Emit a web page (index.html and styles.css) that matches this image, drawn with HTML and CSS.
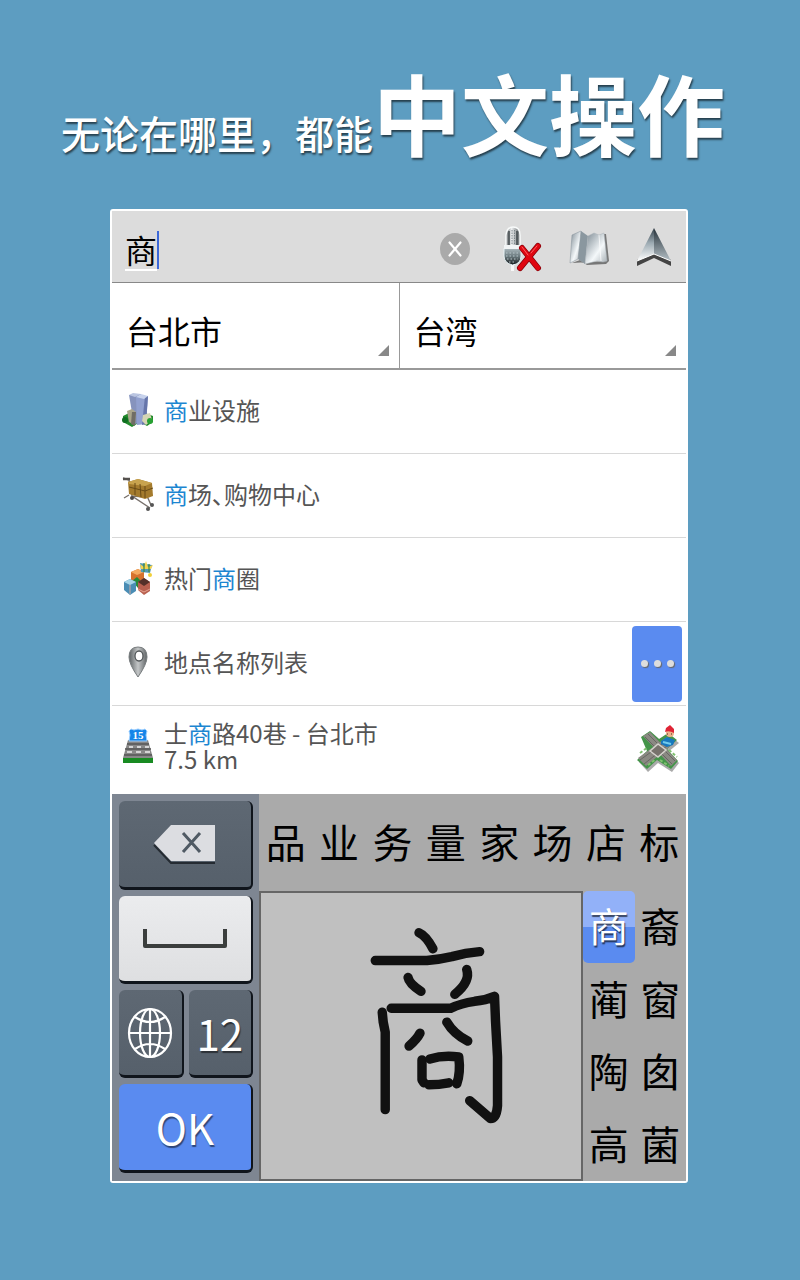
FILE: index.html
```html
<!DOCTYPE html>
<html lang="zh-CN">
  <head>
    <meta charset="UTF-8" />
    <meta name="viewport" content="width=device-width, initial-scale=1.0" />
    <title>中文操作</title>
    <link rel="stylesheet" href="styles.css">
  </head>
  <body>
    <h1 class="headline">无论在哪里，都能<strong>中文操作</strong></h1>

    <main class="device">
      <!-- Search bar -->
      <form class="search">
        <div class="search-field">
          <input class="search-input" type="text" value="商" aria-label="搜索" />
          <span class="caret"></span>
        </div>
        <button class="clear" type="button" aria-label="清除">
          <svg width="30" height="34" viewBox="0 0 30 34">
            <ellipse cx="15" cy="17" rx="15" ry="16" fill="#aaa" />
            <path d="M9.500 10.500l11 13M20.500 10.500l-11 13" stroke="#fff" stroke-width="2.200" stroke-linecap="round" />
          </svg>
        </button>
        <button class="tool" type="button" aria-label="语音">
          <svg width="40" height="46" viewBox="0 0 40 46">
            <defs>
              <linearGradient id="mic" x1="0" x2="1" y1="0" y2="0">
                <stop offset="0" stop-color="#6c7073" /><stop offset="0.400" stop-color="#eef0f1" /><stop offset="1" stop-color="#62676a" />
              </linearGradient>
              <linearGradient id="mic-body" x1="0" x2="0" y1="0" y2="1">
                <stop offset="0" stop-color="#aebbc0" /><stop offset="0.500" stop-color="#69787d" /><stop offset="1" stop-color="#15191b" />
              </linearGradient>
            </defs>
            <rect x="9" y="37" width="3" height="8" fill="#f7f7f7" />
            <path d="M2 22h17v8q0 8-8.500 9Q2 37 2 30z" fill="url(#mic-body)" stroke="#e8f3f6" />
            <path d="M4 22V9Q5 1 11 1q7 0 7 8v13z" fill="url(#mic)" stroke="#f8fafa" stroke-width="1.500" />
            <path d="M7 5v15M15 5v15" stroke="#3f474b" stroke-width="1.500" />
            <path d="M10 4v16M12.500 4v16" stroke="#7c868a" stroke-width="1" stroke-dasharray="1.500 1" />
            <path d="M2 19h17v4H2z" fill="#f1f4f5" />
            <path d="M4 27h13M4 30h13M5 33h11M7 36h7" stroke="#b7c5ca" stroke-dasharray="1.500 2" />
            <path d="M20 22l16 20M36 20L18 42" stroke="#86000a" stroke-width="6" stroke-linecap="round" />
            <path d="M20 22l16 20M36 20L18 42" stroke="#df0711" stroke-width="4.500" stroke-linecap="round" />
            <path d="M20 21l6 8M35 20l-6 7" stroke="#ff6064" stroke-width="1" stroke-linecap="round" />
          </svg>
        </button>
        <button class="tool" type="button" aria-label="地图">
          <svg width="40" height="46" viewBox="0 0 40 46">
            <defs>
              <linearGradient id="fold" x1="0" x2="1" y1="0" y2="1">
                <stop offset="0" stop-color="#7a8790" /><stop offset="0.600" stop-color="#f4f8fa" /><stop offset="1" stop-color="#a5adb2" />
              </linearGradient>
            </defs>
            <path d="M3 37l8-3 7 5 19-1 3-3-3-27h-3l3 27z" fill="#777" />
            <path d="M3 9l9-4-3 28-8 4z" fill="url(#fold)" stroke="#84909a" stroke-width="0.500" />
            <path d="M12 5l7 5-3 28-7-5z" fill="#8a979f" />
            <path d="M19 10l6-3 5 2 5-2 3 28-4 1-6-1-12 3z" fill="url(#fold)" stroke="#aab3b8" stroke-width="0.500" />
            <path d="M30 9l2 26" stroke="#fff" stroke-width="0.700" />
          </svg>
        </button>
        <button class="tool" type="button" aria-label="导航">
          <svg width="36" height="46" viewBox="0 0 36 46">
            <defs>
              <linearGradient id="nav" x1="0" x2="0" y1="0" y2="1">
                <stop offset="0" stop-color="#303d46" /><stop offset="0.450" stop-color="#9caab2" /><stop offset="1" stop-color="#fff" />
              </linearGradient>
              <linearGradient id="nav-side" x1="0" x2="0" y1="0" y2="1">
                <stop offset="0" stop-color="#26323a" /><stop offset="1" stop-color="#b4bfc5" />
              </linearGradient>
            </defs>
            <path d="M1 34l17-8 17 8v6l-17-8-17 8z" fill="#444" />
            <path d="M18 2L1 35l17-7z" fill="url(#nav)" />
            <path d="M18 2l17 33-17-7z" fill="url(#nav-side)" />
            <path d="M1 35l17-7 17 7" fill="none" stroke="#fff" stroke-width="1" />
          </svg>
        </button>
      </form>

      <div class="places">
        <div class="place">
          <select aria-label="城市"><option>台北市</option></select>
        </div>
        <div class="place">
          <select aria-label="地区"><option>台湾</option></select>
        </div>
      </div>

      <!-- Suggestions -->
      <ul class="results">
        <li>
          <a href="#facilities">
            <svg class="icon" viewBox="0 0 32 36">
              <path d="M1 24l6-3 8 8 8-8 8 3v6l-6 4-7-4-8 5-9-5z" fill="#238a2c" />
              <path d="M7 3l12-1 1 29-8 1z" fill="#8693bd" />
              <path d="M7 3l4-2 8 1-6 3z" fill="#bac5e1" />
              <path d="M14 5l12-1-2 28-9 1z" fill="#91a0cf" />
              <path d="M23 4l3 0-2 28-4 1z" fill="#6675aa" />
              <path d="M14 5l5-3 7 2-4 3z" fill="#c7d2ec" />
              <path d="M5 19l5-2 4 3-1 13-6-3z" fill="#aaa58b" />
              <path d="M10 20l4 0-1 14-4-2z" fill="#706d65" />
              <path d="M21 23l7-2 2 7-6 5-4-4z" fill="#d5d5b3" />
              <circle cx="3" cy="28" r="3" fill="#0f6e20" /><circle cx="28" cy="29" r="3" fill="#28a133" />
            </svg>
            <span><mark>商</mark>业设施</span>
          </a>
        </li>
        <li>
          <a href="#malls">
            <svg class="icon" viewBox="0 0 32 36">
              <path d="M1 2l6 2 3 16 18 12M7 19l-5 3M25 20l4 9M10 20l14 1" fill="none" stroke="#77706b" stroke-width="1.400" />
              <path d="M6 6l10-3 14 4 1 13-8 3-16-5z" fill="#a47b2d" />
              <path d="M6 6l10-3 14 4-7 3-16-2z" fill="#c8a34e" />
              <path d="M13 7v12M18 8l1 13M23 10v12M7 11l16 4 8-3" stroke="#684b16" stroke-width="1" fill="none" />
              <path d="M1 3h7" stroke="#55514e" stroke-width="2.500" />
              <circle cx="10" cy="22" r="2" fill="#4e4a49" /><circle cx="26" cy="33" r="2" fill="#555" /><circle cx="30" cy="29" r="2" fill="#555" />
            </svg>
            <span><mark>商</mark>场、购物中心</span>
          </a>
        </li>
        <li>
          <a href="#popular">
            <svg class="icon" viewBox="0 0 32 36">
              <path d="M9 12l7-3 6 3v9l-7 3-6-4z" fill="#d6722d" />
              <path d="M9 12l7-3 6 3-7 3z" fill="#f4aa60" />
              <path d="M18 3l12 2-2 8-9-1z" fill="#549ab7" />
              <path d="M18 4l4 3 2-6 2 6 5-2-2 4H19z" fill="#f5d34f" />
              <path d="M22 3v9M27 4v8" stroke="#3b8944" stroke-width="1.200" />
              <path d="M10 21l5-4 5 5-4 6z" fill="#288a39" />
              <path d="M2 22l6-3 6 3v9l-6 4-6-5z" fill="#4a8db5" />
              <path d="M2 22l6-3 6 3-6 3z" fill="#a7d5e8" />
              <path d="M16 22l6-4 6 4v9l-6 4-6-5z" fill="#b8604f" />
              <path d="M16 22l6-4 6 4-6 4z" fill="#543029" />
              <path d="M8 25v9M16 29l6 3 6-3" stroke="#efb3a0" stroke-width="0.800" fill="none" />
              <circle cx="28" cy="15" r="2" fill="#f0cf39" />
            </svg>
            <span>热门<mark>商</mark>圈</span>
          </a>
        </li>
        <li>
          <a href="#names">
            <svg class="icon" viewBox="0 0 32 36">
              <defs>
                <linearGradient id="pin" x1="0" x2="1" y1="0" y2="0">
                  <stop offset="0" stop-color="#5d6264" /><stop offset="0.500" stop-color="#c3c6c7" /><stop offset="1" stop-color="#606466" />
                </linearGradient>
              </defs>
              <path d="M16 33Q7 20 7 13q0-10 9-10t9 10q0 7-9 20z" fill="url(#pin)" stroke="#777c7e" />
              <ellipse cx="17" cy="12" rx="4" ry="5" fill="#fff" stroke="#525759" stroke-width="1.300" />
            </svg>
            <span>地点名称列表</span>
          </a>
          <button class="more" type="button" aria-label="更多">
            <i></i><i></i><i></i>
          </button>
        </li>
        <li class="street">
          <a href="#street">
            <svg class="icon" viewBox="0 0 32 36">
              <path d="M6 12h20l5 18H1z" fill="#888" />
              <path d="M1 30h30v5H1z" fill="#188b22" />
              <path d="M5 16h22M3 21h26M2 27h28" stroke="#555" stroke-width="1.500" />
              <path d="M7 19h4m4 0h4m4 0h4M5 24h5m4 0h5m4 0h5" stroke="#eee" stroke-width="1.500" />
              <path d="M7 3l2-2 3 1 4-1 4 1 3-1 2 2-1 4 1 6H7l1-6z" fill="#1685e8" stroke="#9bceff" />
              <text x="16" y="11" text-anchor="middle" class="badge-text">15</text>
            </svg>
            <span><span>士<mark>商</mark>路40巷 - 台北市</span><small>7.5 km</small></span>
          </a>
          <button class="crossing" type="button" aria-label="十字路口">
            <svg width="46" height="48" viewBox="0 0 46 48">
              <path d="M6 13l9-5 9 8 9-5 10 8-11 9 11 11-7 9-14-9-10 9L3 38l9-10z" fill="#555" opacity="0.500" />
              <path d="M5 13l9-6 9 8 9-6 9 7-10 9 11 12-7 8-14-9-10 9-10-9 10-9z" fill="#449449" />
              <path d="M7 12l7-4 27 28-6 6zM2 34L31 13l7 6L10 42z" fill="#8a8982" />
              <path d="M9 13l27 27M12 10l27 27M4 36l29-21M8 40l28-22" stroke="#5f5e5a" stroke-width="0.800" />
              <path d="M14 27l8-7 8 6-8 7z" fill="#77726c" stroke="#d5d2cd" stroke-width="1.500" />
              <path d="M12 41l8-6M24 36l9 6M4 29l8-6M33 26l8 7" stroke="#7fc06f" stroke-width="2" stroke-dasharray="3 2" fill="none" />
              <path d="M25 17l6-4 8 3-2 5-6 2-6-3z" fill="#1878bd" />
              <path d="M27 18l8 2" stroke="#70cbed" stroke-width="2" />
              <circle cx="34" cy="9" r="4" fill="#edb38a" />
              <path d="M29 8l1-4 4-3 4 4v4q-5-3-9-1z" fill="#df2435" />
              <path d="M31 10h1m3 0h1" stroke="#442d25" />
            </svg>
          </button>
        </li>
      </ul>

      <!-- Handwriting keyboard -->
      <div class="keyboard">
        <div class="keys">
          <button class="key" type="button" aria-label="删除">
            <svg width="64" height="40" viewBox="0 0 64 40">
              <path d="M1 21L18 39H62" fill="none" stroke="#252b32" stroke-width="2" />
              <path d="M1 19L18 1h44v36H18z" fill="#dcdde1" />
              <path d="M30 9l17 19M47 9L30 28" stroke="#505a64" stroke-width="3" />
            </svg>
          </button>
          <button class="key light" type="button" aria-label="空格">
            <svg width="84" height="24" viewBox="0 0 84 24">
              <path d="M2 2v17h80V2" fill="none" stroke="#3b3e3d" stroke-width="4" stroke-linejoin="round" />
            </svg>
          </button>
          <div class="key-pair">
            <button class="key" type="button" aria-label="语言">
              <svg width="46" height="52" viewBox="0 0 46 52">
                <g fill="none" stroke="#fff" stroke-width="2.200">
                  <ellipse cx="23" cy="26" rx="21" ry="24" />
                  <ellipse cx="23" cy="26" rx="10" ry="24" />
                  <path d="M23 2v48M2 26h42M8 10q15 10 30 0M8 42q15-10 30 0" />
                </g>
              </svg>
            </button>
            <button class="key" type="button">12</button>
          </div>
          <button class="key ok" type="button">OK</button>
        </div>

        <div class="writing">
          <div class="next-words">
            <button type="button">品</button>
            <button type="button">业</button>
            <button type="button">务</button>
            <button type="button">量</button>
            <button type="button">家</button>
            <button type="button">场</button>
            <button type="button">店</button>
            <button type="button">标</button>
          </div>
          <div class="pad-row">
            <div class="pad">
              <svg viewBox="0 0 322 288">
                <g fill="none" stroke="#111" stroke-width="9.500" stroke-linecap="round" stroke-linejoin="round">
                  <path d="M159 40q7 3 14 16" />
                  <path d="M115 68h52q12-1 25-4 14-4 28-5" />
                  <path d="M148 85q1 6 13 14" />
                  <path d="M207 77q4 12-12 25" />
                  <path d="M122 120l1 10 2 10v78" />
                  <path d="M131 116h60q10-5 24-7 11-1 20-5l1 25 2 36v49q-1 13-7 13l-21-18" />
                  <path d="M187 130q7 12 21 19" />
                  <path d="M160 141q-3 6-11 13" />
                  <path d="M162 168v20l2 3" />
                  <path d="M170 167q13-4 29-2 2 16-2 27" />
                  <path d="M169 193q10 0 20-2" />
                </g>
              </svg>
            </div>
            <div class="candidates">
              <button class="selected" type="button">商</button>
              <button type="button">裔</button>
              <button type="button">蔺</button>
              <button type="button">窗</button>
              <button type="button">陶</button>
              <button type="button">囱</button>
              <button type="button">高</button>
              <button type="button">菌</button>
            </div>
          </div>
        </div>
      </div>
    </main>
  </body>
</html>
```
FILE: styles.css
```css
* {
  box-sizing: border-box;
}
body {
  margin: 0;
  padding: 47px 14% 98px;
  background-color: #5d9dc1;
  font-family: "Noto Sans CJK SC", "Noto Sans", sans-serif;
  color: #000;
}
button,
input,
select {
  font-family: inherit;
  color: inherit;
}
button {
  display: flex;
  align-items: center;
  justify-content: center;
  padding: 0;
  border: none;
  background: none;
  cursor: pointer;
}
.headline {
  display: flex;
  align-items: baseline;
  justify-content: center;
  margin: 0 -53px 13px -67px;
  color: #fff;
  font-size: 39px;
  font-weight: 500;
  line-height: 128px;
  white-space: nowrap;
  text-shadow: 1px 2px 2px rgba(0, 0, 0, 0.6);
}
.headline strong {
  font-size: 88px;
  font-weight: 700;
}
.device {
  margin-left: -2px;
  border: 2px solid #fff;
  border-radius: 3px;
  background-color: #fff;
}

/* search */
.search {
  display: flex;
  align-items: center;
  height: 72px;
  padding: 4px 14px 0 13px;
  background-color: #dcdcdc;
  border-bottom: 1px solid #888;
}
.search-field {
  display: flex;
  flex: 1;
  align-items: center;
  padding-top: 3px;
}
.search-input {
  width: 32px;
  height: 42px;
  padding: 0;
  border: none;
  border-bottom: 2px solid #fff;
  outline: none;
  background: none;
  font-size: 32px;
}
.caret {
  width: 2px;
  height: 38px;
  background-color: #3c68d8;
}
.clear {
  margin-right: 32px;
}
.tool + .tool {
  margin-left: 27px;
}

/* city and country */
.places {
  display: flex;
  border-bottom: 2px solid #999;
}
.place {
  position: relative;
  flex: 1;
}
.place + .place {
  border-left: 1px solid #999;
}
.place select {
  width: 100%;
  height: 85px;
  padding: 8px 14px 0;
  border: none;
  appearance: none;
  background: none;
  font-size: 32px;
}
.place::after {
  content: "";
  position: absolute;
  right: 10px;
  bottom: 12px;
  border-bottom: 11px solid #888;
  border-left: 11px solid transparent;
}

/* suggestions */
.results {
  margin: 0;
  padding: 0;
  list-style: none;
}
.results li {
  display: flex;
  align-items: center;
  height: 84px;
  padding-right: 4px;
  border-bottom: 1px solid #d8d8d8;
}
.results a {
  display: flex;
  flex: 1;
  align-items: center;
  gap: 10px;
  padding: 0 0 4px 10px;
  color: #555;
  font-size: 24px;
  line-height: 26px;
  font-feature-settings: "palt";
  text-decoration: none;
}
.results mark {
  background: none;
  color: #1c86d1;
}
.results small {
  display: block;
  font-size: 24px;
}
.results .street {
  height: 88px;
  padding-bottom: 4px;
  border-bottom: none;
}
.icon {
  flex: none;
  width: 32px;
  height: 36px;
}
.badge-text {
  fill: #fff;
  font: bold 11px "Liberation Serif", serif;
}
.more {
  gap: 6px;
  width: 50px;
  height: 76px;
  border-radius: 4px;
  background-color: #5a8bf0;
}
.more i {
  width: 7px;
  height: 7px;
  border-radius: 50%;
  background-color: #ddd;
  box-shadow: 1px 1px 1px #666;
}

/* keyboard */
.keyboard {
  display: flex;
  background-color: #aaa;
}
.keys {
  display: flex;
  flex-direction: column;
  gap: 6px;
  width: 147px;
  padding: 7px 6px 8px 7px;
  background-color: #7e8692;
}
.key {
  flex: 1;
  width: 100%;
  min-height: 88px;
  border-right: 2px solid #10151c;
  border-bottom: 3px solid #10151c;
  border-radius: 6px;
  background: linear-gradient(#5e6873, #56606b);
  color: #fff;
  font-size: 42px;
  line-height: 1;
  text-shadow: 1px 2px 1px rgba(0, 0, 0, 0.5);
}
.key.light {
  background: linear-gradient(#ebecee, #dedfe1);
}
.key.ok {
  background: #5a8bf0;
}
.key-pair {
  display: flex;
  gap: 5px;
}
.writing {
  display: flex;
  flex: 1;
  flex-direction: column;
}
.next-words {
  display: flex;
  height: 97px;
}
.next-words button {
  flex: 1;
  padding-bottom: 4px;
  font-size: 40px;
}
.pad-row {
  display: flex;
  flex: 1;
}
.pad {
  flex: 1;
  border: 2px solid #666;
  background-color: #c0c0c0;
}
.pad svg {
  display: block;
  width: 100%;
}
.candidates {
  display: grid;
  grid-template-columns: 1fr 1fr;
  width: 103px;
}
.candidates button {
  height: 72px;
  padding-bottom: 4px;
  border-radius: 5px;
  font-size: 40px;
}
.candidates .selected {
  background: linear-gradient(#92b1f8 50%, #5a8bf0 50%);
  color: #fff;
  text-shadow: 1px 2px 1px rgba(0, 0, 0, 0.6);
}
```
